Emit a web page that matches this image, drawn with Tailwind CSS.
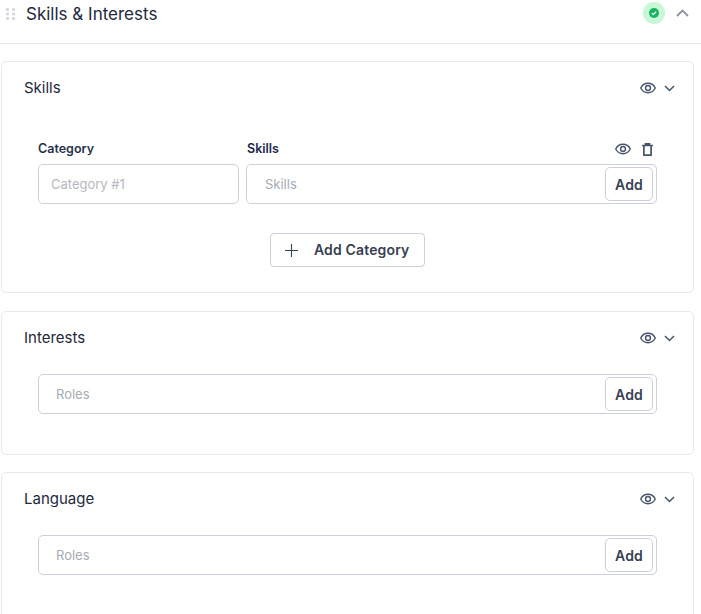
<!DOCTYPE html>
<html lang="en">
<head>
  <meta charset="UTF-8" />
  <title>Skills & Interests</title>
  <script src="https://cdn.jsdelivr.net/npm/@tailwindcss/browser@4"></script>
</head>
<body class="bg-white h-[614px] overflow-hidden font-[Inter,sans-serif] text-[#1f2937]">

  <!-- Section header -->
  <header class="h-[44px] pb-[16px] border-b border-[#e9eaec] flex items-start">
    <svg class="ml-[6px] mt-[8px] w-[9px] h-[12px]" viewBox="0 0 9 12" fill="#d5d8dd">
      <rect x="0" y="0" width="3" height="3" rx="1" /><rect x="6" y="0" width="3" height="3" rx="1" />
      <rect x="0" y="4.5" width="3" height="3" rx="1" /><rect x="6" y="4.5" width="3" height="3" rx="1" />
      <rect x="0" y="9" width="3" height="3" rx="1" /><rect x="6" y="9" width="3" height="3" rx="1" />
    </svg>
    <h1 class="ml-[11px] mt-[3px] text-[17px] leading-[22px] text-[#1e293b]">Skills &amp; Interests</h1>
    <div class="ml-auto mt-[2px] mr-[12px] flex items-center">
      <span class="w-[22px] h-[22px] rounded-full bg-[#c8f7d6] flex items-center justify-center">
        <svg class="w-[10px] h-[10px]" viewBox="0 0 10 10">
          <circle cx="5" cy="5" r="5" fill="#16b364" />
          <path d="M2.8 5.1l1.5 1.5 2.9-3" fill="none" stroke="#fff" stroke-width="1.2" />
        </svg>
      </span>
      <svg class="ml-[11px] w-[13px] h-[8px]" viewBox="0 0 13 8" fill="none" stroke="#8b93a3" stroke-width="1.8">
        <path d="M1 7l5.5-5.500L12 7" />
      </svg>
    </div>
  </header>

  <main class="mx-[1px] w-[693px]">
    <!-- Skills -->
    <section class="mt-[17px] h-[232px] border border-[#e9eaec] rounded-[5px] pt-[15px]">
      <div class="pl-[22px] pr-[18px] flex justify-between items-center h-[20px]">
        <h2 class="mt-[2px] text-[15px] text-[#1e293b]">Skills</h2>
        <div class="mt-[2px] flex items-center gap-[8px]">
          <svg class="w-[16px] h-[12px]" viewBox="0 0 17 12" fill="none" stroke="#475569" stroke-width="1.5"><path d="M.8 6C2.400 2.700 5.200 1 8.500 1s6.100 1.700 7.700 5c-1.600 3.300-4.400 5-7.700 5S2.400 9.300.8 6z" /><circle cx="8.500" cy="6" r="2.600" /></svg>
          <svg class="w-[11px] h-[7px]" viewBox="0 0 11 7" fill="none" stroke="#475569" stroke-width="1.500"><path d="M1 1l4.500 4.500L10 1" /></svg>
        </div>
      </div>

      <div class="mt-[42px] ml-[36px] w-[619px] flex gap-[7px]">
        <div class="w-[201px]">
          <label class="block h-[20px] text-[12.500px] font-semibold leading-[20px] text-[#27324a]">Category</label>
          <div class="mt-[5px] h-[40px] border border-[#ccd0da] rounded-[5px] pl-[12px] flex items-center text-[13px] text-[#b5b8c0]"><span class="mt-[2px]">Category #1</span></div>
        </div>
        <div class="flex-1">
          <div class="flex justify-between items-center h-[20px] pl-[1px] pr-[4px]">
            <label class="text-[12.500px] font-semibold text-[#1c2950]">Skills</label>
            <div class="flex items-center gap-[11px]">
              <svg class="w-[16px] h-[12px]" viewBox="0 0 17 12" fill="none" stroke="#475569" stroke-width="1.500"><path d="M.8 6C2.400 2.700 5.200 1 8.500 1s6.100 1.700 7.700 5c-1.600 3.300-4.400 5-7.700 5S2.400 9.300.8 6z" /><circle cx="8.500" cy="6" r="2.600" /></svg>
              <svg class="w-[11px] h-[13px]" viewBox="0 0 11 13" fill="none" stroke="#475569" stroke-width="1.700"><path d="M0 2.500h11M3.500 2.500V.9h4v1.600M1.900 2.500v9.600h7.200V2.500" /></svg>
            </div>
          </div>
          <div class="mt-[5px] h-[40px] border border-[#ccd0da] rounded-[5px] pl-[18px] pr-[3px] flex items-center justify-between">
            <span class="mt-[2px] text-[13px] text-[#a6abb6]">Skills</span>
            <button class="w-[48px] h-[34px] border border-[#ccd0da] rounded-[5px] text-[14px] font-semibold tracking-[0.15px] text-[#374151]">Add</button>
          </div>
        </div>
      </div>

      <div class="mt-[29px] flex justify-center">
        <button class="w-[155px] h-[34px] border border-[#ccd0da] rounded-[4px] flex items-center pl-[14px] text-[14px] font-semibold tracking-[0.15px] text-[#374151]">
          <svg class="mt-[1px] w-[13px] h-[13px]" viewBox="0 0 13 13" fill="none" stroke="#374151" stroke-width="1.100"><path d="M6.500 0v13M0 6.500h13" /></svg>
          <span class="ml-[16px] mb-[2px]">Add Category</span>
        </button>
      </div>
    </section>

    <!-- Interests -->
    <section class="mt-[18px] h-[144px] border border-[#e9eaec] rounded-[5px] pt-[15px]">
      <div class="pl-[22px] pr-[18px] flex justify-between items-center h-[20px]">
        <h2 class="mt-[2px] text-[15px] text-[#1e293b]">Interests</h2>
        <div class="mt-[2px] flex items-center gap-[8px]">
          <svg class="w-[16px] h-[12px]" viewBox="0 0 17 12" fill="none" stroke="#475569" stroke-width="1.500"><path d="M.8 6C2.400 2.700 5.200 1 8.500 1s6.100 1.700 7.700 5c-1.600 3.300-4.400 5-7.700 5S2.400 9.300.8 6z" /><circle cx="8.500" cy="6" r="2.600" /></svg>
          <svg class="w-[11px] h-[7px]" viewBox="0 0 11 7" fill="none" stroke="#475569" stroke-width="1.500"><path d="M1 1l4.500 4.500L10 1" /></svg>
        </div>
      </div>
      <div class="mt-[27px] ml-[36px] w-[619px] h-[40px] border border-[#ccd0da] rounded-[5px] pl-[17px] pr-[3px] flex items-center justify-between">
        <span class="mt-[2px] text-[13px] text-[#a6abb6]">Roles</span>
        <button class="w-[48px] h-[34px] border border-[#ccd0da] rounded-[5px] text-[14px] font-semibold tracking-[0.15px] text-[#374151]">Add</button>
      </div>
    </section>

    <!-- Language -->
    <section class="mt-[17px] h-[160px] border border-[#e9eaec] rounded-[5px] pt-[15px]">
      <div class="pl-[22px] pr-[18px] flex justify-between items-center h-[20px]">
        <h2 class="mt-[2px] text-[15px] text-[#1e293b]">Language</h2>
        <div class="mt-[2px] flex items-center gap-[8px]">
          <svg class="w-[16px] h-[12px]" viewBox="0 0 17 12" fill="none" stroke="#475569" stroke-width="1.500"><path d="M.8 6C2.400 2.700 5.200 1 8.500 1s6.100 1.700 7.700 5c-1.600 3.300-4.400 5-7.700 5S2.400 9.300.8 6z" /><circle cx="8.500" cy="6" r="2.600" /></svg>
          <svg class="w-[11px] h-[7px]" viewBox="0 0 11 7" fill="none" stroke="#475569" stroke-width="1.500"><path d="M1 1l4.500 4.500L10 1" /></svg>
        </div>
      </div>
      <div class="mt-[27px] ml-[36px] w-[619px] h-[40px] border border-[#ccd0da] rounded-[5px] pl-[17px] pr-[3px] flex items-center justify-between">
        <span class="mt-[2px] text-[13px] text-[#a6abb6]">Roles</span>
        <button class="w-[48px] h-[34px] border border-[#ccd0da] rounded-[5px] text-[14px] font-semibold tracking-[0.15px] text-[#374151]">Add</button>
      </div>
    </section>
  </main>
</body>
</html>
